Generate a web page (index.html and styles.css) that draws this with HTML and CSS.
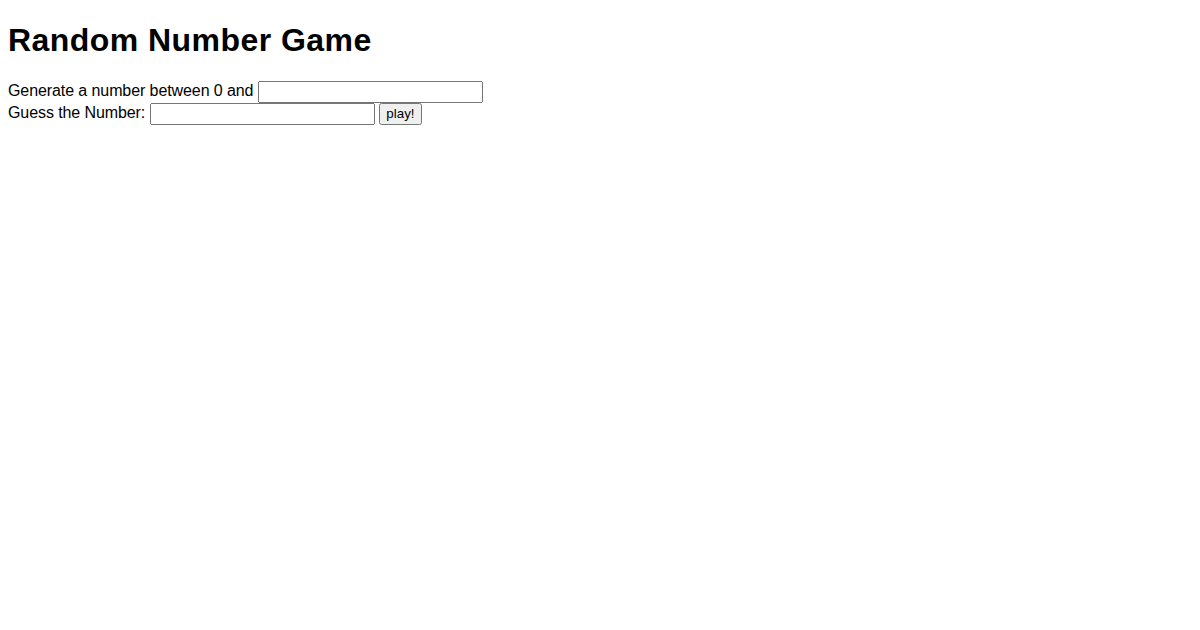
FILE: index.html
```html
<!DOCTYPE html>
<html>
<head>
<meta charset="utf-8">
<title>Random Number Game</title>
<link rel="stylesheet" href="styles.css">
</head>
<body>
<h1 class="title">Random Number Game</h1>
<div class="row">Generate a number between 0 and <input type="text" class="field"></div>
<div class="row">Guess the Number: <input type="text" class="field"> <button class="play">play!</button></div>
</body>
</html>
```
FILE: styles.css
```css
body {
  margin: 8px;
  font-family: "Liberation Sans", Arial, sans-serif;
  font-size: 16px;
  color: #000;
  background: #fff;
}
.title {
  font-size: 32px;
  font-weight: bold;
  letter-spacing: 0.45px;
  margin: 13.5px 0 22.44px;
}
.row {
  letter-spacing: -0.09px;
  height: 22px;
  line-height: 20px;
}
.field, .play {
  font-family: "Liberation Sans", Arial, sans-serif;
  font-size: 13.333px;
  letter-spacing: 0;
  box-sizing: border-box;
  height: 22px;
  vertical-align: top;
}
.field {
  width: 225px;
}
.play {
  width: 43px;
  padding: 0 4px;
}
```
